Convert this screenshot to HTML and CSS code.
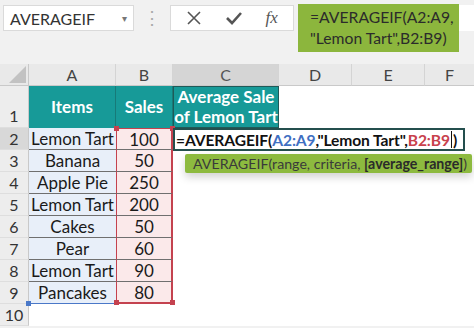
FILE: index.html
```html
<!DOCTYPE html>
<html lang="en">
<head>
  <meta charset="UTF-8">
  <meta name="viewport" content="width=device-width, initial-scale=1.0">
  <title>AVERAGEIF</title>
  <link rel="stylesheet" href="styles.css">
</head>
<body>
  <div class="toolbar">
    <div class="name-box">
      <span>AVERAGEIF</span>
      <span class="drop">&#9662;</span>
    </div>
    <div class="grip">&#8942;</div>
    <div class="fn-box">
      <svg width="16" height="14" viewBox="0 0 16 14"><path d="M2 1 L14 13 M14 1 L2 13" stroke="#555" stroke-width="1.6" fill="none"/></svg>
      <svg width="18" height="14" viewBox="0 0 18 14"><path d="M2 7 L7 12 L16 2" stroke="#555" stroke-width="2.6" fill="none"/></svg>
      <i class="fx">fx</i>
    </div>
    <div class="callout">=AVERAGEIF(A2:A9,<br>"Lemon Tart",B2:B9)</div>
    <div class="formula-input"></div>
  </div>

  <div class="sheet">
    <div class="corner"><span class="tri"></span></div>
    <div class="col-head">A</div>
    <div class="col-head">B</div>
    <div class="col-head active">C</div>
    <div class="col-head">D</div>
    <div class="col-head">E</div>
    <div class="col-head last">F</div>

    <div class="row-head tall">1</div>
    <div class="cell title">Items</div>
    <div class="cell title">Sales</div>
    <div class="cell title selected">Average Sale<br>of Lemon Tart</div>
    <div class="cell"></div>
    <div class="cell"></div>
    <div class="cell"></div>

    <div class="row-head active">2</div>
    <div class="cell item">Lemon Tart</div>
    <div class="cell sale first">100<span class="dot tl"></span><span class="dot tr"></span></div>
    <div class="cell edit-host">
      <div class="editor">=AVERAGEIF(<span class="ref-a">A2:A9</span>,"Lemon Tart",<span class="ref-b">B2:B9</span><span class="cursor"></span>)</div>
      <div class="tip">AVERAGEIF(range, criteria,&nbsp;<b>[average_range]</b>)</div>
    </div>
    <div class="cell"></div>
    <div class="cell"></div>
    <div class="cell"></div>

    <div class="row-head">3</div>
    <div class="cell item">Banana</div>
    <div class="cell sale">50</div>
    <div class="cell"></div><div class="cell"></div><div class="cell"></div><div class="cell"></div>

    <div class="row-head">4</div>
    <div class="cell item">Apple Pie</div>
    <div class="cell sale">250</div>
    <div class="cell"></div><div class="cell"></div><div class="cell"></div><div class="cell"></div>

    <div class="row-head">5</div>
    <div class="cell item">Lemon Tart</div>
    <div class="cell sale">200</div>
    <div class="cell"></div><div class="cell"></div><div class="cell"></div><div class="cell"></div>

    <div class="row-head">6</div>
    <div class="cell item">Cakes</div>
    <div class="cell sale">50</div>
    <div class="cell"></div><div class="cell"></div><div class="cell"></div><div class="cell"></div>

    <div class="row-head">7</div>
    <div class="cell item">Pear</div>
    <div class="cell sale">60</div>
    <div class="cell"></div><div class="cell"></div><div class="cell"></div><div class="cell"></div>

    <div class="row-head">8</div>
    <div class="cell item">Lemon Tart</div>
    <div class="cell sale">90</div>
    <div class="cell"></div><div class="cell"></div><div class="cell"></div><div class="cell"></div>

    <div class="row-head">9</div>
    <div class="cell item end">Pancakes<span class="dot bl blue"></span></div>
    <div class="cell sale end">80<span class="dot bl"></span><span class="dot br"></span></div>
    <div class="cell"></div><div class="cell"></div><div class="cell"></div><div class="cell"></div>

    <div class="row-head">10</div>
    <div class="cell"></div><div class="cell"></div><div class="cell"></div>
    <div class="cell"></div><div class="cell"></div><div class="cell"></div>
  </div>
</body>
</html>
```

FILE: styles.css
```css
* {
  box-sizing: border-box;
}

body {
  margin: 0;
  width: 474px;
  height: 328px;
  overflow: hidden;
  background-color: #f1f1f1;
  font-family: Lato, "Liberation Sans", sans-serif;
  color: #222;
}

/* formula bar */

.toolbar {
  display: flex;
  align-items: flex-start;
  height: 64px;
}

.name-box {
  display: flex;
  align-items: center;
  justify-content: space-between;
  margin: 5px 0 0 3px;
  width: 131px;
  height: 26px;
  padding: 0 6px 0 6px;
  background: #fff;
  border: 1px solid #dadada;
  font-size: 16px;
  color: #333;
}

.name-box .drop {
  font-size: 10px;
  color: #777;
}

.grip {
  width: 36px;
  margin-top: 6px;
  text-align: center;
  font-size: 18px;
  color: #aaa;
}

.fn-box {
  display: flex;
  align-items: center;
  justify-content: space-around;
  margin-top: 5px;
  width: 124px;
  height: 26px;
  padding: 0 4px;
  background: #fff;
  border: 1px solid #dadada;
}

.fx {
  font-family: "Liberation Serif", serif;
  font-size: 17px;
  color: #555;
}

.callout {
  margin: 4px 0 0 4px;
  width: 161px;
  height: 48px;
  padding: 3px 0 0 12px;
  background: #8cb63d;
  font-size: 15.7px;
  line-height: 21px;
  color: #2b2b2b;
  white-space: nowrap;
}

.formula-input {
  flex: 1;
  margin-top: 5px;
  height: 26px;
  background: #fff;
}

/* grid */

.sheet {
  display: grid;
  grid-template-columns: 29px 87px 57px 106px 73px 73px 1fr;
  grid-template-rows: 22px 42px repeat(9, 22px);
  background: #fff;
  font-size: 17px;
}

.corner,
.col-head {
  background: #e9e9e9;
  border-bottom: 1px solid #c9c9c9;
}

.corner {
  position: relative;
  border-right: 1px solid #c9c9c9;
}

.tri {
  position: absolute;
  right: 2px;
  bottom: 2px;
  border-left: 17px solid transparent;
  border-bottom: 17px solid #c2c2c2;
}

.col-head {
  display: flex;
  align-items: center;
  justify-content: center;
  border-right: 1px solid #d4d4d4;
  font-size: 16px;
  color: #444;
}

.col-head.active {
  background: #d5d5d5;
  color: #555;
}

.col-head.last {
  border-right: none;
}

.row-head {
  display: flex;
  align-items: flex-end;
  justify-content: center;
  padding-bottom: 1px;
  background: #ededed;
  border-right: 1px solid #c9c9c9;
  border-bottom: 1px solid #dedede;
  font-size: 16px;
  color: #333;
}

.row-head.tall {
  padding-bottom: 2px;
}

.row-head.active {
  background: #d8d8d8;
}

.cell {
  position: relative;
  display: flex;
  align-items: center;
  justify-content: center;
  white-space: nowrap;
}

.cell.title {
  background: #179a98;
  color: #fff;
  font-weight: bold;
  text-align: center;
  line-height: 20px;
  border-right: 1px solid #177a78;
}

.cell.title.selected {
  border: 1px solid #1f5a58;
}

.cell.item {
  background: #e8eff9;
  border-bottom: 1px solid #6f6f6f;
  color: #1a1a1a;
}

.cell.item.end {
  border-bottom: 1px solid #4a78c8;
}

.cell.sale {
  background: #fbe9ea;
  border-left: 1px solid #c4424f;
  border-right: 2px solid #c4424f;
  border-bottom: 1px solid #6f6f6f;
  color: #1a1a1a;
}

.cell.sale.first {
  border-top: 1px solid #c4424f;
}

.cell.sale.end {
  border-bottom: 2px solid #c4424f;
}

.dot {
  position: absolute;
  width: 5px;
  height: 5px;
  background: #c4424f;
}

.dot.blue {
  background: #4a78c8;
}

.dot.tl { top: -3px; left: -3px; }
.dot.tr { top: -3px; right: -4px; }
.dot.bl { bottom: -3px; left: -3px; }
.dot.br { bottom: -3px; right: -4px; }

/* in-cell editor and hint */

.edit-host {
  overflow: visible;
  z-index: 2;
}

.editor {
  position: absolute;
  top: 0;
  left: 0;
  width: 292px;
  height: 23px;
  padding-left: 1px;
  display: flex;
  align-items: center;
  background: #fff;
  border: 2px solid #244f4e;
  font-weight: bold;
  font-size: 15.6px;
  letter-spacing: -0.1px;
  color: #111;
}

.ref-a {
  color: #3f6fc2;
}

.ref-b {
  color: #c8414c;
}

.cursor {
  width: 1px;
  height: 17px;
  margin: 0 1px;
  background: #111;
}

.tip {
  position: absolute;
  top: 26px;
  left: 12px;
  width: 287px;
  height: 19px;
  padding-left: 8px;
  display: flex;
  align-items: center;
  background: #8dba3f;
  border-radius: 2px;
  box-shadow: 0 4px 8px rgba(0, 0, 0, 0.18);
  font-size: 14.2px;
  color: #3a3a3a;
}

.tip b {
  color: #2a2a2a;
}
```
